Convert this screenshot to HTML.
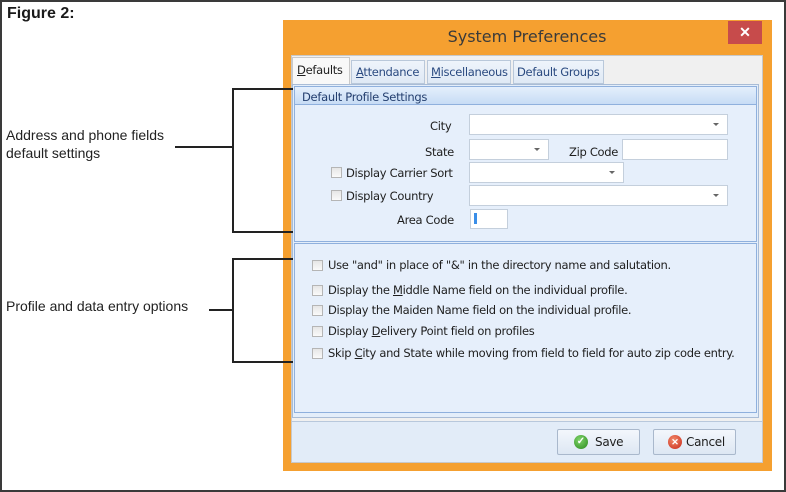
<!DOCTYPE html>
<html><head><style>
*{margin:0;padding:0;box-sizing:border-box}
body{width:786px;height:492px;background:#fff;position:relative;overflow:hidden;font-family:"Liberation Sans",sans-serif}
.a{position:absolute}
.frame{left:0;top:0;width:786px;height:492px;border:2px solid #3a3a3a}
.ln{background:#222}
.t{font-family:"DejaVu Sans","Liberation Sans",sans-serif;font-size:11.5px;color:#1e1e1e;white-space:nowrap;letter-spacing:-0.3px}
.box{background:#fff;border:1px solid #c4cfdc}
.arr{position:absolute;right:8px;top:8px;width:0;height:0;border-left:3px solid transparent;border-right:3px solid transparent;border-top:3px solid #666}
.cb{position:absolute;width:11px;height:11px;border:1px solid #b5b5b5;background:linear-gradient(#e6e6e6,#fafafa)}
.btn{border:1px solid #a9b8cc;background:linear-gradient(#f3f7fc,#dde7f3);border-radius:2px}
</style></head><body>
<div class="a frame"></div>
<div class="a" style="left:7px;top:5px;font-size:16px;font-weight:bold;color:#1a1a1a">Figure 2:</div>
<div class="a" style="left:6px;top:126px;font-size:14px;color:#222;line-height:18px">Address and phone fields<br>default settings</div>
<div class="a" style="left:6px;top:298px;font-size:14px;color:#222">Profile and data entry options</div>

<!-- window -->
<div class="a" style="left:283px;top:20px;width:489px;height:451px;background:#f5a030"></div>
<div class="a" style="left:282px;top:27px;width:490px;text-align:center;font-family:'DejaVu Sans',sans-serif;font-size:16px;color:#3a3a3a">System Preferences</div>
<div class="a" style="left:728px;top:21px;width:34px;height:23px;background:#c74b4b;color:#fff;text-align:center;font-size:14px;line-height:22px;font-weight:bold">✕</div>
<div class="a" style="left:291px;top:55px;width:472px;height:408px;background:#f0f0f0;border:1px solid #c8c8c8"></div>
<!-- tabs -->
<div class="a" style="left:292px;top:57px;width:58px;height:28px;background:#f8f8f8;border:1px solid #c9c9c9;border-bottom:none"></div>
<div class="a t" style="left:297px;top:63px"><u>D</u>efaults</div>
<div class="a" style="left:351px;top:60px;width:74px;height:24px;background:linear-gradient(#eef4fb,#dfe9f5);border:1px solid #b9c8da"></div>
<div class="a t" style="left:356px;top:65px;color:#2a4a80"><u>A</u>ttendance</div>
<div class="a" style="left:427px;top:60px;width:84px;height:24px;background:linear-gradient(#eef4fb,#dfe9f5);border:1px solid #b9c8da"></div>
<div class="a t" style="left:431px;top:65px;color:#2a4a80"><u>M</u>iscellaneous</div>
<div class="a" style="left:513px;top:60px;width:91px;height:24px;background:linear-gradient(#eef4fb,#dfe9f5);border:1px solid #b9c8da"></div>
<div class="a t" style="left:517px;top:65px;color:#2a4a80">Default Groups</div>
<!-- panel -->
<div class="a" style="left:292px;top:84px;width:467px;height:334px;border:1px solid #a9bcd6;background:#e4eefa"></div>
<div class="a" style="left:294px;top:86px;width:463px;height:19px;background:linear-gradient(#e4effc,#c7dcf5);border:1px solid #8fb0dd"></div>
<div class="a t" style="left:302px;top:90px;color:#233e6e">Default Profile Settings</div>
<div class="a" style="left:294px;top:105px;width:463px;height:137px;border:1px solid #8fb0dd;border-top:none;background:#e6effb"></div>
<div class="a" style="left:294px;top:243px;width:463px;height:170px;border:1px solid #8fb0dd;background:#e6effb"></div>
<!-- form -->
<div class="a t" style="left:430px;top:119px">City</div>
<div class="a box" style="left:469px;top:114px;width:259px;height:21px"><div class="arr"></div></div>
<div class="a t" style="left:425px;top:145px">State</div>
<div class="a box" style="left:469px;top:139px;width:80px;height:21px"><div class="arr"></div></div>
<div class="a t" style="left:569px;top:145px">Zip Code</div>
<div class="a box" style="left:622px;top:139px;width:106px;height:21px"></div>
<div class="cb" style="left:331px;top:167px"></div>
<div class="a t" style="left:346px;top:166px">Display Carrier Sort</div>
<div class="a box" style="left:469px;top:162px;width:155px;height:21px"><div class="arr"></div></div>
<div class="cb" style="left:331px;top:190px"></div>
<div class="a t" style="left:346px;top:189px">Display Country</div>
<div class="a box" style="left:469px;top:185px;width:259px;height:21px"><div class="arr"></div></div>
<div class="a t" style="left:397px;top:213px">Area Code</div>
<div class="a box" style="left:470px;top:209px;width:38px;height:20px"><div class="a" style="left:3px;top:3px;width:3px;height:11px;background:#3a8ee8"></div></div>
<!-- options -->
<div class="cb" style="left:312px;top:260px"></div><div class="a t" style="left:328px;top:258px">Use "and" in place of "&amp;" in the directory name and salutation.</div>
<div class="cb" style="left:312px;top:285px"></div><div class="a t" style="left:328px;top:283px">Display the <u>M</u>iddle Name field on the individual profile.</div>
<div class="cb" style="left:312px;top:305px"></div><div class="a t" style="left:328px;top:303px">Display the Maiden Name field on the individual profile.</div>
<div class="cb" style="left:312px;top:326px"></div><div class="a t" style="left:328px;top:324px">Display <u>D</u>elivery Point field on profiles</div>
<div class="cb" style="left:312px;top:348px"></div><div class="a t" style="left:328px;top:346px">Skip <u>C</u>ity and State while moving from field to field for auto zip code entry.</div>
<!-- bottom -->
<div class="a" style="left:292px;top:421px;width:470px;height:41px;background:#e2ecf8;border-top:1px solid #b8c8dc"></div>
<div class="a btn" style="left:557px;top:429px;width:83px;height:26px"></div>
<div class="a" style="left:574px;top:435px;width:14px;height:14px;border-radius:50%;background:radial-gradient(circle at 40% 35%,#7fd46a,#2b8a1e);color:#fff;font-size:10px;line-height:14px;text-align:center;font-weight:bold">✓</div>
<div class="a t" style="left:595px;top:435px;font-size:12px">Save</div>
<div class="a btn" style="left:653px;top:429px;width:83px;height:26px"></div>
<div class="a" style="left:668px;top:435px;width:14px;height:14px;border-radius:50%;background:radial-gradient(circle at 40% 35%,#f28a6a,#c8281a);color:#fff;font-size:9px;line-height:14px;text-align:center;font-weight:bold">✕</div>
<div class="a t" style="left:686px;top:435px;font-size:12px">Cancel</div>
<!-- brackets -->
<div class="a ln" style="left:232px;top:88px;width:2px;height:145px"></div>
<div class="a ln" style="left:232px;top:88px;width:61px;height:2px"></div>
<div class="a ln" style="left:232px;top:231px;width:61px;height:2px"></div>
<div class="a ln" style="left:175px;top:146px;width:58px;height:2px"></div>
<div class="a ln" style="left:232px;top:258px;width:2px;height:105px"></div>
<div class="a ln" style="left:232px;top:258px;width:61px;height:2px"></div>
<div class="a ln" style="left:232px;top:361px;width:61px;height:2px"></div>
<div class="a ln" style="left:209px;top:309px;width:24px;height:2px"></div>
</body></html>
